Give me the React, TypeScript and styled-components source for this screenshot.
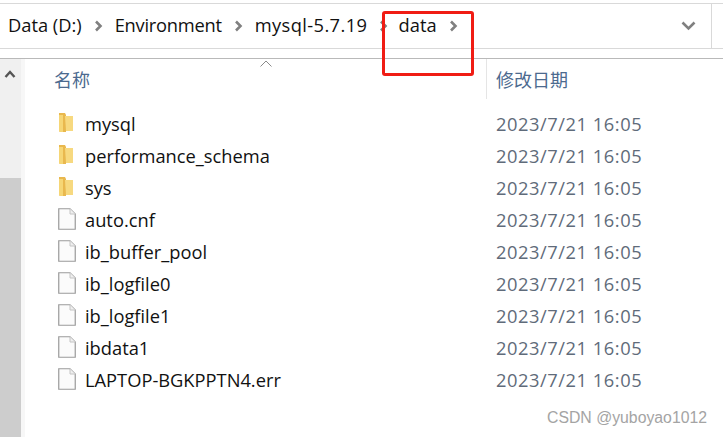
import React from "react";
import styled, { createGlobalStyle } from "styled-components";

const Global = createGlobalStyle`
  html, body { margin: 0; padding: 0; background: #fff; }
  #root { width: 723px; height: 437px; overflow: hidden; }
`;

const FONT = `"Open Sans", "Noto Sans CJK SC", sans-serif`;

const Page = styled.div`
  position: relative;
  width: 723px;
  height: 437px;
  background: #fff;
  overflow: hidden;
  font-family: ${FONT};
  display: flex;
  flex-direction: column;
`;

const AddressBar = styled.div`
  margin-top: 3px;
  height: 44px;
  flex: none;
  border-top: 1px solid #d9d9d9;
  border-bottom: 1px solid #d9d9d9;
  display: flex;
  align-items: center;
`;

const Crumbs = styled.div`
  flex: 1;
  display: flex;
  align-items: center;
  padding-left: 8px;
  padding-bottom: 2px;
  box-sizing: border-box;
  height: 100%;
`;

const Crumb = styled.span<{ $tracking: number }>`
  font-size: 18.3px;
  letter-spacing: ${(p) => p.$tracking}px;
  color: #111;
  line-height: 24px;
`;

const Sep = styled.svg<{ $after: number }>`
  width: 9px;
  height: 12px;
  margin: 1px ${(p) => p.$after}px 0 12px;
  flex: none;
`;

const DropCell = styled.div`
  width: 44px;
  height: 100%;
  display: flex;
  align-items: center;
  justify-content: center;
  padding-right: 2px;
  box-sizing: border-box;
  border-right: 1px solid #d9d9d9;
  margin-right: 11px;
`;

const Spacer = styled.div`
  height: 9px;
  flex: none;
`;

const Main = styled.div`
  flex: 1;
  display: flex;
  border-top: 1px solid #b9b9b9;
  min-height: 0;
`;

const Scrollbar = styled.div`
  width: 21px;
  flex: none;
  background: #f0f0f0;
  display: flex;
  flex-direction: column;
  border-right: 4px solid #f7f7f7;
`;

const ScrollTrack = styled.div`
  height: 119px;
  flex: none;
  display: flex;
  justify-content: center;
  padding-top: 10px;
  box-sizing: border-box;
`;

const ScrollThumb = styled.div`
  flex: 1;
  background: #cdcdcd;
`;

const List = styled.div`
  flex: 1;
  display: flex;
  flex-direction: column;
  min-width: 0;
`;

const Header = styled.div`
  display: grid;
  grid-template-columns: 461px 1fr;
  height: 40px;
  margin-bottom: 8px;
`;

const HeadCell = styled.div<{ $divider?: boolean }>`
  display: flex;
  align-items: center;
  color: #4c6a8f;
  font-size: 18px;
  padding-left: ${(p) => (p.$divider ? "9px" : "29px")};
  border-left: ${(p) => (p.$divider ? "1px solid #e5e5e5" : "none")};
  padding-bottom: 1px;
`;

const Row = styled.div`
  display: grid;
  grid-template-columns: 461px 1fr;
  height: 32px;
  align-items: center;
`;

const NameCell = styled.div`
  display: flex;
  align-items: center;
  padding-left: 33px;
`;

const IconBox = styled.span`
  width: 18px;
  height: 22px;
  margin-right: 9px;
  flex: none;
  display: flex;
  align-items: center;
  justify-content: center;
`;

const Name = styled.span`
  font-size: 18.3px;
  color: #111;
  white-space: nowrap;
`;

const DateCell = styled.div`
  font-size: 18.3px;
  letter-spacing: 0.55px;
  color: #5f6b7a;
  padding-left: 10px;
  white-space: nowrap;
`;

const SortArrow = styled.svg`
  position: absolute;
  left: 260px;
  top: 60px;
  width: 12px;
  height: 7px;
`;

const RedBox = styled.div`
  position: absolute;
  left: 382px;
  top: 11px;
  width: 92px;
  height: 65px;
  box-sizing: border-box;
  border: 3px solid #f01c14;
  border-radius: 3px;
`;

const Watermark = styled.div`
  position: absolute;
  left: 547px;
  top: 408px;
  font-family: "Liberation Sans", Arial, sans-serif;
  font-size: 15.8px;
  line-height: 20px;
  color: #a4a4a4;
  white-space: nowrap;
`;

const Chevron = ({ after }: { after: number }) => (
  <Sep $after={after} viewBox="0 0 9 12">
    <path d="M2 1.5 L6.5 6 L2 10.5" fill="none" stroke="#808080" strokeWidth="2.6" />
  </Sep>
);

const FolderIcon = () => (
  <svg width="16" height="22" viewBox="0 0 16 22">
    <path d="M0 1h6l1 2v17H1l-1-1z" fill="#e9b84e" />
    <path d="M6 4h8v15H7z" fill="#f7d980" />
    <path d="M0 3h4v17H1l-1-1z" fill="#f6d675" />
  </svg>
);

const FileIcon = () => (
  <svg width="18" height="22" viewBox="0 0 18 22">
    <path d="M.75.75H12L17.25 6V21.25H.75z" fill="#fbfbfb" stroke="#9a9a9a" strokeWidth="1.2" />
    <path d="M12 .75V6h5.25" fill="#efefef" stroke="#c4c4c4" strokeWidth="1" />
  </svg>
);

type Entry = { name: string; folder?: boolean };

const entries: Entry[] = [
  { name: "mysql", folder: true },
  { name: "performance_schema", folder: true },
  { name: "sys", folder: true },
  { name: "auto.cnf" },
  { name: "ib_buffer_pool" },
  { name: "ib_logfile0" },
  { name: "ib_logfile1" },
  { name: "ibdata1" },
  { name: "LAPTOP-BGKPPTN4.err" },
];

const crumbs = [
  { label: "Data (D:)", tracking: 0, after: 12 },
  { label: "Environment", tracking: -0.25, after: 12 },
  { label: "mysql-5.7.19", tracking: 0.4, after: 10 },
  { label: "data", tracking: 0.1, after: 12 },
];

export default function App() {
  return (
    <Page>
      <Global />
      <AddressBar>
        <Crumbs>
          {crumbs.map((c) => (
            <React.Fragment key={c.label}>
              <Crumb $tracking={c.tracking}>{c.label}</Crumb>
              <Chevron after={c.after} />
            </React.Fragment>
          ))}
        </Crumbs>
        <DropCell>
          <svg width="15" height="10" viewBox="0 0 15 10">
            <path d="M1.5 1.5 L7.5 7.5 L13.5 1.5" fill="none" stroke="#808080" strokeWidth="2.6" />
          </svg>
        </DropCell>
      </AddressBar>
      <Spacer />
      <Main>
        <Scrollbar>
          <ScrollTrack>
            <svg width="14" height="10" viewBox="0 0 14 10">
              <path d="M1.5 8 L6 3 L10.5 8" fill="none" stroke="#555" strokeWidth="2.4" />
            </svg>
          </ScrollTrack>
          <ScrollThumb />
        </Scrollbar>
        <List>
          <Header>
            <HeadCell>名称</HeadCell>
            <HeadCell $divider>修改日期</HeadCell>
          </Header>
          {entries.map((e) => (
            <Row key={e.name}>
              <NameCell>
                <IconBox>{e.folder ? <FolderIcon /> : <FileIcon />}</IconBox>
                <Name>{e.name}</Name>
              </NameCell>
              <DateCell>2023/7/21 16:05</DateCell>
            </Row>
          ))}
        </List>
      </Main>
      <SortArrow viewBox="0 0 12 7">
        <path d="M.5 6.5 L6 1 L11.5 6.5" fill="none" stroke="#8a8a8a" strokeWidth="1" />
      </SortArrow>
      <RedBox />
      <Watermark>CSDN @yuboyao1012</Watermark>
    </Page>
  );
}
